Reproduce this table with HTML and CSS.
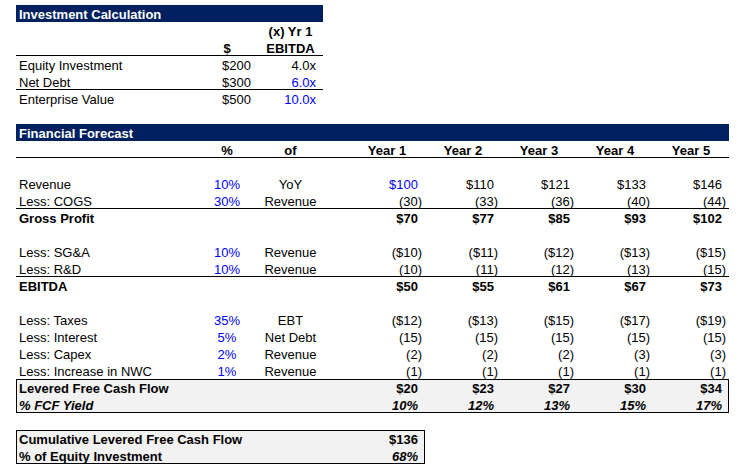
FILE: index.html
```html
<!DOCTYPE html>
<html lang="en">
<head>
<meta charset="utf-8">
<title>Investment Calculation</title>
<link rel="stylesheet" href="styles.css">
</head>
<body>
<div class="sheet">
  <section class="inv">
    <div class="bar">Investment Calculation</div>
    <div class="row"><div></div><div></div><div class="cell c b">(x) Yr 1</div></div>
    <div class="row rule"><div></div><div class="cell c b">$</div><div class="cell c b">EBITDA</div></div>
    <div class="row"><div class="cell">Equity Investment</div><div class="cell r p">$200</div><div class="cell r p">4.0x</div></div>
    <div class="row rule"><div class="cell">Net Debt</div><div class="cell r p">$300</div><div class="cell r p blue">6.0x</div></div>
    <div class="row"><div class="cell">Enterprise Value</div><div class="cell r p">$500</div><div class="cell r p blue">10.0x</div></div>
  </section>

  <div class="spacer"></div>

  <section class="fc">
    <div class="bar wide">Financial Forecast</div>
    <div class="row rule b">
      <div></div><div class="cell c">%</div><div class="cell c">of</div><div></div>
      <div class="cell c">Year 1</div><div class="cell c">Year 2</div><div class="cell c">Year 3</div><div class="cell c">Year 4</div><div class="cell c">Year 5</div>
    </div>
    <div class="spacer"></div>
    <div class="row">
      <div class="cell">Revenue</div><div class="cell c blue">10%</div><div class="cell c">YoY</div><div></div>
      <div class="cell r p blue">$100</div><div class="cell r p">$110</div><div class="cell r p">$121</div><div class="cell r p">$133</div><div class="cell r p">$146</div>
    </div>
    <div class="row rule">
      <div class="cell">Less: COGS</div><div class="cell c blue">30%</div><div class="cell c">Revenue</div><div></div>
      <div class="cell r">(30)</div><div class="cell r">(33)</div><div class="cell r">(36)</div><div class="cell r">(40)</div><div class="cell r">(44)</div>
    </div>
    <div class="row b">
      <div class="cell">Gross Profit</div><div></div><div></div><div></div>
      <div class="cell r p">$70</div><div class="cell r p">$77</div><div class="cell r p">$85</div><div class="cell r p">$93</div><div class="cell r p">$102</div>
    </div>
    <div class="spacer"></div>
    <div class="row">
      <div class="cell">Less: SG&amp;A</div><div class="cell c blue">10%</div><div class="cell c">Revenue</div><div></div>
      <div class="cell r">($10)</div><div class="cell r">($11)</div><div class="cell r">($12)</div><div class="cell r">($13)</div><div class="cell r">($15)</div>
    </div>
    <div class="row rule">
      <div class="cell">Less: R&amp;D</div><div class="cell c blue">10%</div><div class="cell c">Revenue</div><div></div>
      <div class="cell r">(10)</div><div class="cell r">(11)</div><div class="cell r">(12)</div><div class="cell r">(13)</div><div class="cell r">(15)</div>
    </div>
    <div class="row b">
      <div class="cell">EBITDA</div><div></div><div></div><div></div>
      <div class="cell r p">$50</div><div class="cell r p">$55</div><div class="cell r p">$61</div><div class="cell r p">$67</div><div class="cell r p">$73</div>
    </div>
    <div class="spacer"></div>
    <div class="row">
      <div class="cell">Less: Taxes</div><div class="cell c blue">35%</div><div class="cell c">EBT</div><div></div>
      <div class="cell r">($12)</div><div class="cell r">($13)</div><div class="cell r">($15)</div><div class="cell r">($17)</div><div class="cell r">($19)</div>
    </div>
    <div class="row">
      <div class="cell">Less: Interest</div><div class="cell c blue">5%</div><div class="cell c">Net Debt</div><div></div>
      <div class="cell r">(15)</div><div class="cell r">(15)</div><div class="cell r">(15)</div><div class="cell r">(15)</div><div class="cell r">(15)</div>
    </div>
    <div class="row">
      <div class="cell">Less: Capex</div><div class="cell c blue">2%</div><div class="cell c">Revenue</div><div></div>
      <div class="cell r">(2)</div><div class="cell r">(2)</div><div class="cell r">(2)</div><div class="cell r">(3)</div><div class="cell r">(3)</div>
    </div>
    <div class="row">
      <div class="cell">Less: Increase in NWC</div><div class="cell c blue">1%</div><div class="cell c">Revenue</div><div></div>
      <div class="cell r">(1)</div><div class="cell r">(1)</div><div class="cell r">(1)</div><div class="cell r">(1)</div><div class="cell r">(1)</div>
    </div>
    <div class="box">
      <div class="row b">
        <div class="cell">Levered Free Cash Flow</div><div></div><div></div><div></div>
        <div class="cell r p">$20</div><div class="cell r p">$23</div><div class="cell r p">$27</div><div class="cell r p">$30</div><div class="cell r p">$34</div>
      </div>
      <div class="row b i">
        <div class="cell">% FCF Yield</div><div></div><div></div><div></div>
        <div class="cell r p">10%</div><div class="cell r p">12%</div><div class="cell r p">13%</div><div class="cell r p">15%</div><div class="cell r p">17%</div>
      </div>
    </div>
    <div class="spacer"></div>
    <div class="box cum">
      <div class="row b">
        <div class="cell span4">Cumulative Levered Free Cash Flow</div>
        <div class="cell r p">$136</div>
      </div>
      <div class="row b">
        <div class="cell span4">% of Equity Investment</div>
        <div class="cell r p i">68%</div>
      </div>
    </div>
  </section>
</div>
</body>
</html>
```

FILE: styles.css
```css
* {
  box-sizing: border-box;
  margin: 0;
  padding: 0;
}

body {
  background: #ffffff;
  color: #000000;
  font: 13px/17px "Liberation Sans", Arial, sans-serif;
}

.sheet {
  padding: 5px 0 0 16px;
}

.row {
  display: grid;
  grid-template-columns: 180px 62px 65px 26px repeat(5, 76px);
  width: 713px;
  height: 17px;
}

.inv .row {
  grid-template-columns: 180px 62px 65px;
  width: 307px;
}

.cum .row {
  grid-template-columns: 180px 62px 65px 26px 76px;
  width: 409px;
}

.cell {
  white-space: nowrap;
  padding: 1px 3px 0;
}

.span4 {
  grid-column: span 4;
}

.c { text-align: center; }
.r { text-align: right; }
.p { padding-right: 7px; }
.b { font-weight: bold; }
.i { font-style: italic; }
.blue { color: #0000ff; }

.rule {
  border-bottom: 1px solid #000000;
}

.bar {
  height: 17px;
  width: 307px;
  padding: 1px 0 0 3px;
  background: #002060;
  color: #ffffff;
  font-weight: bold;
}

.bar.wide {
  width: 713px;
}

.spacer {
  height: 17px;
}

.box {
  width: 713px;
  background: #f2f2f2;
  box-shadow: inset 0 0 0 1px #000000;
}

.box.cum {
  width: 409px;
}
```
